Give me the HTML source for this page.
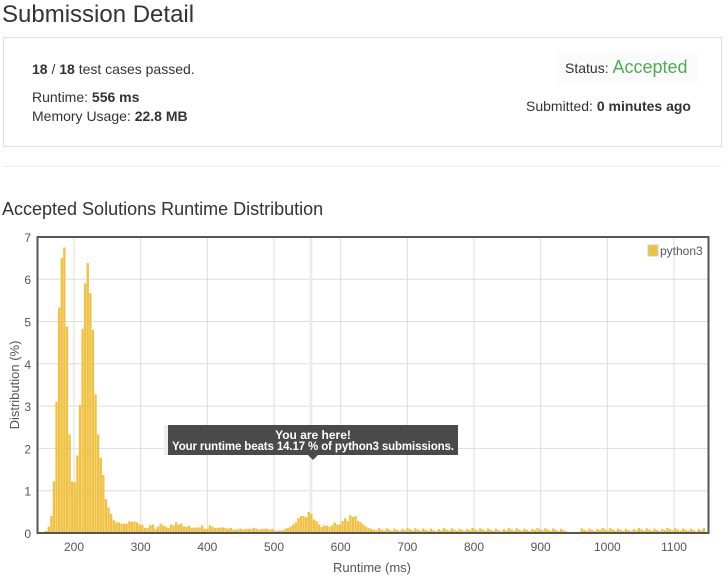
<!DOCTYPE html>
<html><head><meta charset="utf-8"><style>
body{margin:0;width:728px;height:579px;background:#fff;font-family:"Liberation Sans",Arial,sans-serif;color:#333;overflow:hidden;position:relative}
.a{position:absolute;white-space:nowrap}
</style></head><body>
<div class="a" style="left:2px;top:1px;font-size:24px;color:#333">Submission Detail</div>
<div class="a" style="left:3px;top:37px;width:717px;height:108px;border:1px solid #ddd"></div>
<div class="a" style="left:32px;top:61px;font-size:14px"><b>18</b> / <b>18</b> test cases passed.</div>
<div class="a" style="left:32px;top:89px;font-size:14px">Runtime: <b>556 ms</b></div>
<div class="a" style="left:32px;top:108px;font-size:14px">Memory Usage: <b>22.8 MB</b></div>
<div class="a" style="left:557px;top:52px;width:141px;height:32px;background:#fbfbfb"></div>
<div class="a" style="left:565px;top:57px;font-size:14px">Status: <span style="color:#4cae4c;font-size:18px">Accepted</span></div>
<div class="a" style="left:526px;top:98px;font-size:14px">Submitted: <b>0 minutes ago</b></div>
<div class="a" style="left:3px;top:166px;width:718px;height:1px;background:#eee"></div>
<div class="a" style="left:2px;top:199px;font-size:18px;color:#333">Accepted Solutions Runtime Distribution</div>
<svg class="a" style="left:0;top:0" width="728" height="579" id="s"></svg>
<script>
var s=document.getElementById('s'),h='';
var X=function(ms){return 74+(ms-200)*0.6667},Y=function(v){return 533-v*42.3};
for(var i=1;i<7;i++)h+='<line x1="37" x2="709" y1="'+Y(i)+'" y2="'+Y(i)+'" stroke="#ddd"/>';
for(var m=200;m<=1100;m+=100)h+='<line y1="237" y2="533" x1="'+X(m)+'" x2="'+X(m)+'" stroke="#ddd"/>';
h+='<line y1="237" y2="533" x1="311" x2="311" stroke="#ececec" stroke-width="3"/>';
var hs=[0.05,0.15,0.4,1.22,3.1,5.33,6.5,6.75,4.88,2.33,1.22,1.2,1.83,3.03,4.83,5.9,6.38,5.67,4.8,3.28,2.33,1.78,1.37,0.8,0.6,0.45,0.3,0.25,0.25,0.22,0.22,0.22,0.28,0.26,0.27,0.25,0.2,0.2,0.12,0.12,0.18,0.2,0.1,0.15,0.22,0.18,0.15,0.12,0.2,0.18,0.25,0.2,0.22,0.15,0.15,0.17,0.12,0.13,0.13,0.13,0.18,0.1,0.1,0.18,0.15,0.12,0.12,0.13,0.13,0.12,0.1,0.12,0.08,0.08,0.1,0.1,0.08,0.1,0.1,0.1,0.12,0.1,0.08,0.1,0.1,0.1,0.08,0.1,0.05,0.06,0.06,0.06,0.1,0.12,0.15,0.2,0.25,0.35,0.4,0.4,0.37,0.5,0.45,0.32,0.28,0.2,0.15,0.18,0.17,0.15,0.18,0.25,0.2,0.2,0.28,0.35,0.28,0.42,0.38,0.4,0.28,0.25,0.2,0.15,0.12,0.1,0.08];
var x=45,w=2.6;
for(var j=0;j<hs.length;j++){h+='<rect x="'+x+'" y="'+Y(hs[j])+'" width="'+(w-0.3)+'" height="'+hs[j]*42.3+'" fill="#f0c040"/>';x+=w;}
while(x<705){var v=0.04+((x*7)%5)/60;if(((x*13)|0)%17!=0)h+='<rect x="'+x+'" y="'+Y(v)+'" width="'+(w-0.3)+'" height="'+v*42.3+'" fill="#f0c040"/>';x+=w;}
h+='<rect x="37.5" y="237" width="671" height="296" fill="none" stroke="#555" stroke-width="2"/>';
for(var i=0;i<=7;i++)h+='<text x="31" y="'+(Y(i)+5)+'" font-size="12" fill="#555" text-anchor="end">'+i+'</text>';
for(var m=200;m<=1100;m+=100)h+='<text x="'+X(m)+'" y="551" font-size="12" fill="#555" text-anchor="middle">'+m+'</text>';
h+='<text x="372" y="572" font-size="13" fill="#555" text-anchor="middle">Runtime (ms)</text>';
h+='<text transform="translate(19,385) rotate(-90)" font-size="13" fill="#555" text-anchor="middle">Distribution (%)</text>';
h+='<rect x="648" y="245" width="10" height="11" fill="#f0c040" stroke="#ccc"/><text x="660" y="255" font-size="12" fill="#555">python3</text>';
h+='<rect x="164" y="425" width="5" height="30" fill="#eee"/><rect x="168" y="425" width="290" height="30" fill="#4a4a4a"/><path d="M308 455 L313 460 L318 455Z" fill="#4a4a4a"/>';
h+='<text x="313" y="439" font-size="12" font-weight="bold" fill="#fff" text-anchor="middle">You are here!</text><text x="313" y="450" font-size="11.5" font-weight="bold" fill="#fff" text-anchor="middle" textLength="282">Your runtime beats 14.17 % of python3 submissions.</text>';
s.innerHTML=h;
</script>
</body></html>
